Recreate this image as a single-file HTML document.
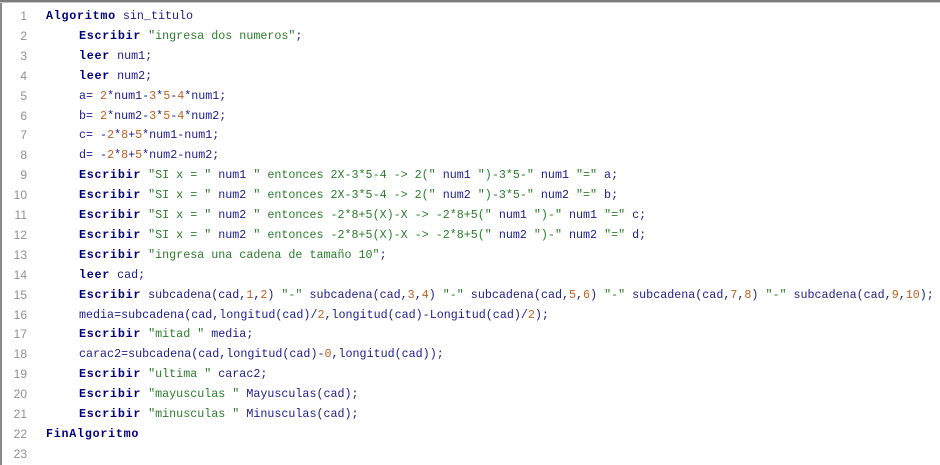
<!DOCTYPE html>
<html><head><meta charset="utf-8"><style>
html,body{margin:0;padding:0;background:#fff;width:940px;height:465px;overflow:hidden}
.wrap{position:absolute;left:0;top:0;width:940px;height:465px;box-sizing:border-box;border-left:2px solid #8a8a8a;border-top:2px solid #7a7a7a;}
.topl{position:absolute;left:0;top:2px;width:940px;height:1px;background:#c8c8c8}
.ln{position:absolute;left:0;width:27px;text-align:right;color:#909090;font:12px "Liberation Sans",sans-serif}
.c{position:absolute;white-space:pre;font:11.7px "Liberation Mono",monospace;color:#1c1c8c}
b{color:#00007a;font-weight:bold;letter-spacing:0.75px}
.s{color:#2a7d2a}
.n{color:#c0601e}
</style></head><body><div class="wrap"></div><div class="topl"></div>
<div id="x"></div>
<script>
const L=[
[46,'<b>Algoritmo</b> sin_titulo'],
[79,'<b>Escribir</b> <span class=s>"ingresa dos numeros"</span>;'],
[79,'<b>leer</b> num1;'],
[79,'<b>leer</b> num2;'],
[79,'a= <span class=n>2</span>*num1-<span class=n>3</span>*<span class=n>5</span>-<span class=n>4</span>*num1;'],
[79,'b= <span class=n>2</span>*num2-<span class=n>3</span>*<span class=n>5</span>-<span class=n>4</span>*num2;'],
[79,'c= -<span class=n>2</span>*<span class=n>8</span>+<span class=n>5</span>*num1-num1;'],
[79,'d= -<span class=n>2</span>*<span class=n>8</span>+<span class=n>5</span>*num2-num2;'],
[79,'<b>Escribir</b> <span class=s>"SI x = "</span> num1 <span class=s>" entonces 2X-3*5-4 -> 2("</span> num1 <span class=s>")-3*5-"</span> num1 <span class=s>"="</span> a;'],
[79,'<b>Escribir</b> <span class=s>"SI x = "</span> num2 <span class=s>" entonces 2X-3*5-4 -> 2("</span> num2 <span class=s>")-3*5-"</span> num2 <span class=s>"="</span> b;'],
[79,'<b>Escribir</b> <span class=s>"SI x = "</span> num2 <span class=s>" entonces -2*8+5(X)-X -> -2*8+5("</span> num1 <span class=s>")-"</span> num1 <span class=s>"="</span> c;'],
[79,'<b>Escribir</b> <span class=s>"SI x = "</span> num2 <span class=s>" entonces -2*8+5(X)-X -> -2*8+5("</span> num2 <span class=s>")-"</span> num2 <span class=s>"="</span> d;'],
[79,'<b>Escribir</b> <span class=s>"ingresa una cadena de tamaño 10"</span>;'],
[79,'<b>leer</b> cad;'],
[79,'<b>Escribir</b> subcadena(cad,<span class=n>1</span>,<span class=n>2</span>) <span class=s>"-"</span> subcadena(cad,<span class=n>3</span>,<span class=n>4</span>) <span class=s>"-"</span> subcadena(cad,<span class=n>5</span>,<span class=n>6</span>) <span class=s>"-"</span> subcadena(cad,<span class=n>7</span>,<span class=n>8</span>) <span class=s>"-"</span> subcadena(cad,<span class=n>9</span>,<span class=n>10</span>);'],
[79,'media=subcadena(cad,longitud(cad)/<span class=n>2</span>,longitud(cad)-Longitud(cad)/<span class=n>2</span>);'],
[79,'<b>Escribir</b> <span class=s>"mitad "</span> media;'],
[79,'carac2=subcadena(cad,longitud(cad)-<span class=n>0</span>,longitud(cad));'],
[79,'<b>Escribir</b> <span class=s>"ultima "</span> carac2;'],
[79,'<b>Escribir</b> <span class=s>"mayusculas "</span> Mayusculas(cad);'],
[79,'<b>Escribir</b> <span class=s>"minusculas "</span> Minusculas(cad);'],
[46,'<b>FinAlgoritmo</b>'],
[46,'']];
let h='';
L.forEach((l,i)=>{const y=9+i*19.9;
h+=`<div class="ln" style="top:${y}px">${i+1}</div><div class="c" style="left:${l[0]}px;top:${y}px">${l[1]}</div>`;});
document.getElementById('x').innerHTML=h;
</script>
</body></html>
